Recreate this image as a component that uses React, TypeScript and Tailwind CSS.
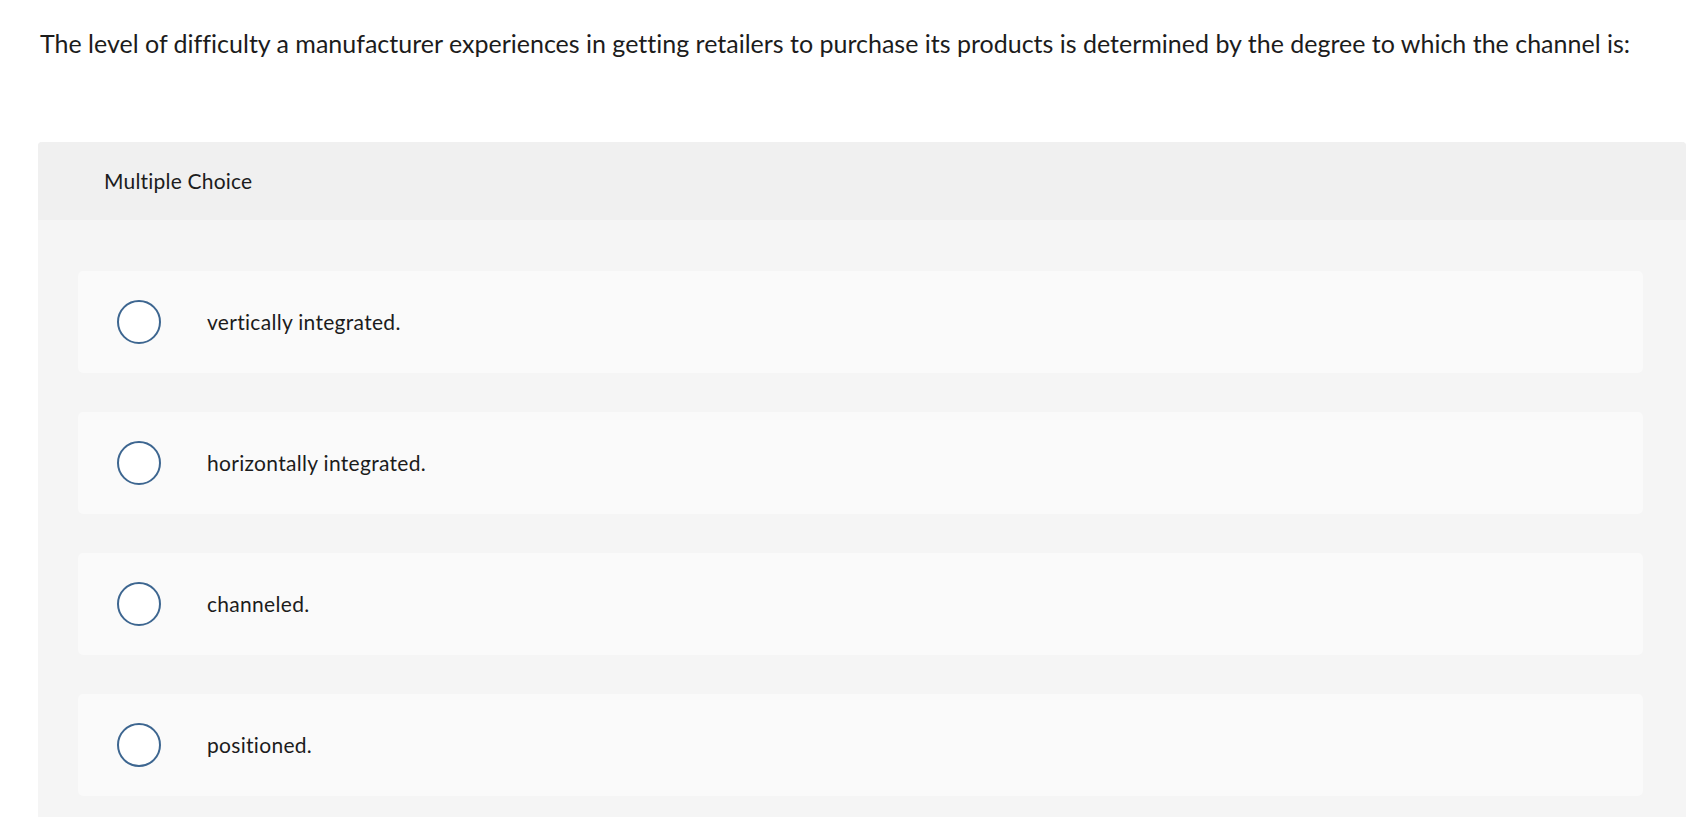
import React from "react"

const options = [
  "vertically integrated.",
  "horizontally integrated.",
  "channeled.",
  "positioned.",
]

const App: React.FC = () => {
  return (
    <div
      className="min-h-screen bg-white text-[#1c1c1c] [font-variant-ligatures:none]"
      style={{ fontFamily: "Lato, 'Open Sans', sans-serif" }}
    >
      <div className="pt-[27px] pl-[40px] text-[25px] leading-[32px]">
        The level of difficulty a manufacturer experiences in getting retailers to purchase its products is determined by the degree to which the channel is:
      </div>
      <div className="mt-[83px] ml-[38px] w-[1648px] rounded-t-[4px] bg-[#f5f5f5]">
        <div className="flex h-[78px] items-center rounded-t-[4px] bg-[#f0f0f0] pl-[66px] text-[21px] tracking-[0.2px]">
          Multiple Choice
        </div>
        <div className="flex flex-col gap-[39px] px-[40px] pt-[51px] pb-[40px]">
          {options.map((o) => (
            <label
              key={o}
              className="flex h-[102px] w-[1565px] cursor-pointer items-center rounded-[5px] bg-[#fafafa] pl-[39px]"
            >
              <span className="h-[44px] w-[44px] shrink-0 rounded-full border-2 border-[#3d6690] bg-white" />
              <span className="ml-[46px] text-[21px] tracking-[0.3px]">{o}</span>
            </label>
          ))}
        </div>
      </div>
    </div>
  )
}

export default App
